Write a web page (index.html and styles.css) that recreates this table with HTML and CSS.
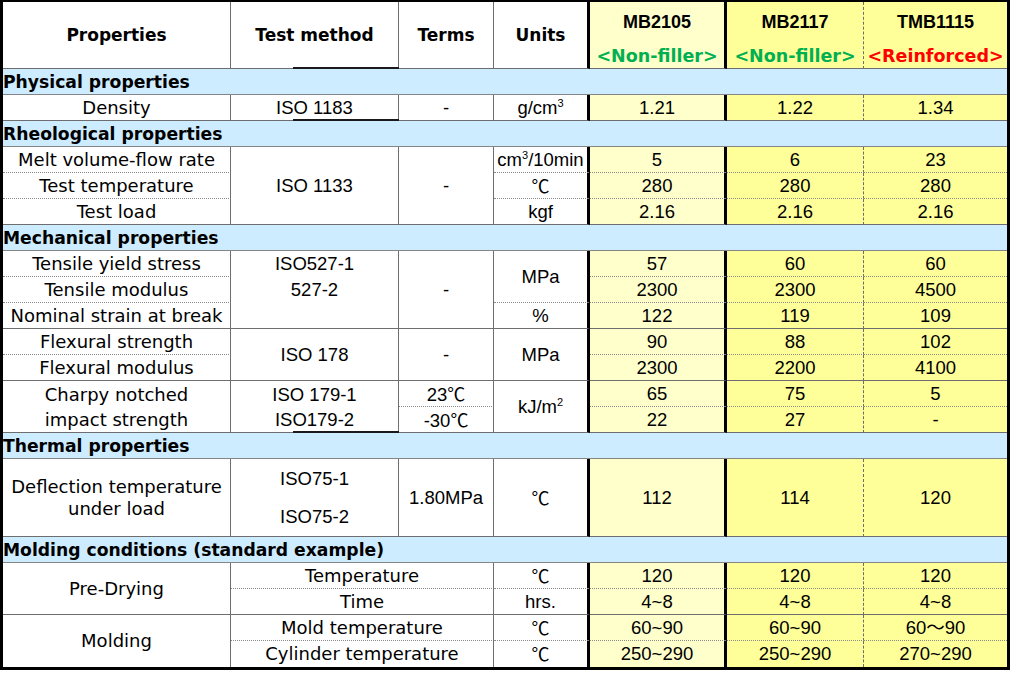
FILE: index.html
```html
<!DOCTYPE html>
<html lang="en">
<head>
<meta charset="utf-8">
<title>Material properties</title>
<link rel="stylesheet" href="styles.css">
</head>
<body>
<table class="spec">
  <colgroup>
    <col class="w-p"><col class="w-m"><col class="w-t"><col class="w-u"><col class="w-a"><col class="w-b"><col class="w-c">
  </colgroup>
  <thead>
    <tr class="hdr">
      <th class="lbl">Properties</th>
      <th class="lbl mk">Test method</th>
      <th class="lbl">Terms</th>
      <th class="lbl u">Units</th>
      <th class="a prod"><span class="model">MB2105</span><span class="tag nf">&lt;Non-filler&gt;</span></th>
      <th class="b prod"><span class="model">MB2117</span><span class="tag nf">&lt;Non-filler&gt;</span></th>
      <th class="c prod"><span class="model">TMB1115</span><span class="tag rf">&lt;Reinforced&gt;</span></th>
    </tr>
  </thead>
  <tbody>
    <tr><td class="band" colspan="7">Physical properties</td></tr>
    <tr>
      <td class="jp">Density</td>
      <td class="mk">ISO 1183</td>
      <td>-</td>
      <td class="u">g/cm<sup>3</sup></td>
      <td class="a">1.21</td><td class="b">1.22</td><td class="c">1.34</td>
    </tr>

    <tr><td class="band" colspan="7">Rheological properties</td></tr>
    <tr>
      <td class="jp d">Melt volume-flow rate</td>
      <td rowspan="3">ISO 1133</td>
      <td rowspan="3">-</td>
      <td class="u d">cm<sup>3</sup>/10min</td>
      <td class="a d">5</td><td class="b d">6</td><td class="c d">23</td>
    </tr>
    <tr>
      <td class="jp d">Test temperature</td>
      <td class="u d"><span class="deg">℃</span></td>
      <td class="a d">280</td><td class="b d">280</td><td class="c d">280</td>
    </tr>
    <tr>
      <td class="jp">Test load</td>
      <td class="u">kgf</td>
      <td class="a">2.16</td><td class="b">2.16</td><td class="c">2.16</td>
    </tr>

    <tr><td class="band" colspan="7">Mechanical properties</td></tr>
    <tr>
      <td class="jp d">Tensile yield stress</td>
      <td rowspan="3" class="top26">ISO527-1<br>527-2</td>
      <td rowspan="3">-</td>
      <td rowspan="2" class="u d">MPa</td>
      <td class="a d">57</td><td class="b d">60</td><td class="c d">60</td>
    </tr>
    <tr>
      <td class="jp d">Tensile modulus</td>
      <td class="a d">2300</td><td class="b d">2300</td><td class="c d">4500</td>
    </tr>
    <tr>
      <td class="jp">Nominal strain at break</td>
      <td class="u">%</td>
      <td class="a">122</td><td class="b">119</td><td class="c">109</td>
    </tr>
    <tr>
      <td class="jp d">Flexural strength</td>
      <td rowspan="2">ISO 178</td>
      <td rowspan="2">-</td>
      <td rowspan="2" class="u">MPa</td>
      <td class="a d">90</td><td class="b d">88</td><td class="c d">102</td>
    </tr>
    <tr>
      <td class="jp">Flexural modulus</td>
      <td class="a">2300</td><td class="b">2200</td><td class="c">4100</td>
    </tr>
    <tr>
      <td rowspan="2" class="jp l25">Charpy notched<br>impact strength</td>
      <td rowspan="2" class="l25 mk">ISO 179-1<br>ISO179-2</td>
      <td class="d">23<span class="deg">℃</span></td>
      <td rowspan="2" class="u">kJ/m<sup>2</sup></td>
      <td class="a d">65</td><td class="b d">75</td><td class="c d">5</td>
    </tr>
    <tr>
      <td>-30<span class="deg">℃</span></td>
      <td class="a">22</td><td class="b">27</td><td class="c">-</td>
    </tr>

    <tr><td class="band" colspan="7">Thermal properties</td></tr>
    <tr class="tall">
      <td class="jp">Deflection temperature<br>under load</td>
      <td class="l38">ISO75-1<br>ISO75-2</td>
      <td>1.80MPa</td>
      <td class="u"><span class="deg">℃</span></td>
      <td class="a">112</td><td class="b">114</td><td class="c">120</td>
    </tr>

    <tr><td class="band" colspan="7">Molding conditions (standard example)</td></tr>
    <tr>
      <td rowspan="2" class="jp">Pre-Drying</td>
      <td colspan="2" class="jp d">Temperature</td>
      <td class="u d"><span class="deg">℃</span></td>
      <td class="a d">120</td><td class="b d">120</td><td class="c d">120</td>
    </tr>
    <tr>
      <td colspan="2" class="jp">Time</td>
      <td class="u">hrs.</td>
      <td class="a">4~8</td><td class="b">4~8</td><td class="c">4~8</td>
    </tr>
    <tr>
      <td rowspan="2" class="jp nb">Molding</td>
      <td colspan="2" class="jp d">Mold temperature</td>
      <td class="u d"><span class="deg">℃</span></td>
      <td class="a d">60~90</td><td class="b d">60~90</td><td class="c d">60～90</td>
    </tr>
    <tr class="last">
      <td colspan="2" class="jp">Cylinder temperature</td>
      <td class="u"><span class="deg">℃</span></td>
      <td class="a">250~290</td><td class="b">250~290</td><td class="c">270~290</td>
    </tr>
  </tbody>
</table>
</body>
</html>
```

FILE: styles.css
```css
* { box-sizing: border-box; }
html, body { margin: 0; padding: 0; background: #ffffff; }

.spec {
  width: 1010px;
  table-layout: fixed;
  border-collapse: separate;
  border-spacing: 0;
  border: 3px solid #000;
  border-top-width: 2px;
  font-family: "Liberation Sans", "Noto Sans CJK JP", sans-serif;
  font-size: 18.5px;
  color: #000;
}

.w-p { width: 228px; }
.w-m { width: 168px; }
.w-t { width: 95px; }
.w-u { width: 96px; }
.w-a { width: 137px; }
.w-b { width: 137px; }
.w-c { width: 143px; }

.spec th,
.spec td {
  padding: 0;
  text-align: center;
  vertical-align: middle;
  line-height: 22px;
  font-weight: normal;
  white-space: nowrap;
  border-right: 1px solid #6e6e6e;
  border-bottom: 1px solid #6e6e6e;
}

.spec tbody tr { height: 26px; }
.spec .hdr { height: 67px; }
.spec .tall { height: 78px; }

.spec .lbl {
  font-family: "DejaVu Sans", sans-serif;
  font-weight: bold;
  font-size: 17px;
}

.spec .jp {
  font-family: "DejaVu Sans", "Noto Sans CJK JP", sans-serif;
  font-size: 18px;
}

.deg {
  font-family: "Noto Sans CJK JP", sans-serif;
  font-size: 18px;
}

.spec .u { border-right: 3px solid #000; }
.spec .a { background: #ffffcc; border-right: 3px solid #000; }
.spec .b { background: #ffff99; border-right: 1px dashed #6e6e6e; }
.spec .c { background: #ffff99; border-right: 0; }

.spec .d { border-bottom: 1px dotted #8a8a8a; }
.spec .nb,
.spec .last td { border-bottom: 0; }

.spec .l25 { line-height: 25px; }
.spec .top26 { line-height: 26px; vertical-align: top; }
.spec .l38 { line-height: 38px; }

.spec .band {
  background: #cdecff;
  text-align: left;
  padding-left: 0;
  font-family: "DejaVu Sans", sans-serif;
  font-weight: bold;
  font-size: 17.2px;
  border-right: 0;
  border-bottom: 1px solid #858585;
}

.spec .prod {
  vertical-align: top;
  padding-top: 10px;
}
.model {
  display: block;
  font-weight: bold;
  font-size: 18px;
  line-height: 20px;
}
.tag {
  display: block;
  margin-top: 14px;
  font-family: "DejaVu Sans", sans-serif;
  font-weight: bold;
  font-size: 17.5px;
  line-height: 20px;
}
.nf { color: #00b050; }
.rf { color: #ff0000; }

sup {
  font-size: 11px;
  line-height: 0;
  vertical-align: 7px;
}

.spec .mk { position: relative; }
.spec .mk::after {
  content: "";
  position: absolute;
  left: 62px;
  right: -1px;
  bottom: -1px;
  height: 2px;
  background: #1a1a1a;
}
```
